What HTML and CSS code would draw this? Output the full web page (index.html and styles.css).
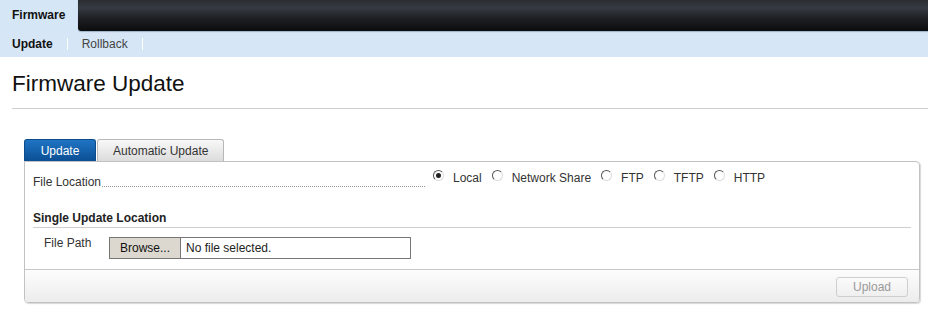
FILE: index.html
```html
<html lang="en">
<head>
  <meta charset="UTF-8">
  <title>Firmware</title>
  <link rel="stylesheet" href="styles.css">
</head>
<body>
  <div class="topbar">
    <div class="top-tab">Firmware</div>
    <div class="top-dark"></div>
  </div>
  <div class="subnav">
    <span class="sub-item active">Update</span>
    <span class="sub-sep"></span>
    <span class="sub-item">Rollback</span>
    <span class="sub-sep"></span>
  </div>

  <h1 class="page-title">Firmware Update</h1>

  <div class="content">
    <div class="tabs">
      <div class="tab selected">Update</div>
      <div class="tab">Automatic Update</div>
    </div>
    <div class="panel">
      <div class="panel-body">
        <div class="row">
          <div class="label-lead">
            <span>File Location</span>
            <span class="leader"></span>
          </div>
          <div class="radios">
            <label class="radio"><span class="dot checked"></span>Local</label>
            <label class="radio"><span class="dot"></span>Network Share</label>
            <label class="radio"><span class="dot"></span>FTP</label>
            <label class="radio"><span class="dot"></span>TFTP</label>
            <label class="radio"><span class="dot"></span>HTTP</label>
          </div>
        </div>
        <div class="section-title">Single Update Location</div>
        <div class="file-row">
          <span class="file-label">File Path</span>
          <div class="file-input">
            <span class="browse">Browse...</span>
            <span class="file-name">No file selected.</span>
          </div>
        </div>
      </div>
      <div class="panel-foot">
        <span class="upload">Upload</span>
      </div>
    </div>
  </div>
</body>
</html>
```
FILE: styles.css
```css
body {
  margin: 0;
  font-family: "Liberation Sans", Arial, sans-serif;
  font-size: 12px;
  color: #222;
  background: #fff;
}

.topbar {
  display: flex;
  height: 31px;
  background: #d5e6f7;
}

.top-tab {
  width: 66px;
  padding-left: 12px;
  line-height: 30px;
  font-weight: bold;
  color: #111;
}

.top-dark {
  flex: 1;
  background: linear-gradient(#2a2c30 0%, #363a42 25%, #1d1f23 60%, #0b0c0d 100%);
  border-bottom-left-radius: 3px;
  box-shadow: 0 1px 1px #9cb0c6;
}

.subnav {
  display: flex;
  align-items: center;
  height: 26px;
  padding-left: 12px;
  background: #d6e6f7;
}

.sub-item {
  color: #444;
}

.sub-item.active {
  font-weight: bold;
  color: #111;
}

.sub-sep {
  width: 1px;
  height: 12px;
  background: #fff;
  margin: 0 14px;
}

.page-title {
  margin: 13px 0 0 12px;
  padding-bottom: 10px;
  font-size: 22.5px;
  font-weight: normal;
  color: #111;
  line-height: 28px;
  border-bottom: 1px solid #cfcfcf;
}

.content {
  padding: 30px 8px 0 24px;
}

.tabs {
  display: flex;
  height: 22px;
}

.tab {
  line-height: 22px;
  padding: 0 15px;
  margin-right: 1px;
  background: linear-gradient(#f8f8f8, #dcdcdc);
  border: 1px solid #b8b8b8;
  border-bottom: none;
  border-radius: 3px 3px 0 0;
  color: #333;
  height: 22px;
  box-sizing: border-box;
}

.tab.selected {
  background: linear-gradient(#1f74c4, #0b4f94);
  border-color: #0c4c8c;
  color: #fff;
  width: 72px;
  text-align: center;
  padding: 0;
}

.panel {
  border: 1px solid #c2c2c2;
  border-radius: 0 4px 4px 4px;
  box-shadow: 1px 1px 1px #d8d8d8;
}

.panel-body {
  padding: 9px 8px 10px 8px;
}

.row {
  display: flex;
  align-items: flex-end;
  height: 18px;
}

.label-lead {
  display: flex;
  align-items: flex-end;
  width: 392px;
  margin-right: 8px;
  color: #333;
  line-height: 13px;
}

.leader {
  flex: 1;
  margin-left: 1px;
  margin-bottom: 2px;
  border-bottom: 1px dotted #999;
}

.radios {
  display: flex;
  align-items: center;
  align-self: flex-start;
}

.radio {
  display: flex;
  align-items: center;
  margin-right: 10px;
  color: #333;
}

.dot {
  width: 9px;
  height: 9px;
  border-radius: 50%;
  border: 1px solid #555;
  border-right-color: #ddd;
  border-bottom-color: #ddd;
  margin-right: 9px;
  margin-top: -6px;
  position: relative;
}

.dot.checked::after {
  content: "";
  position: absolute;
  left: 2px;
  top: 2px;
  width: 5px;
  height: 5px;
  border-radius: 50%;
  background: #222;
}

.section-title {
  margin-top: 22px;
  font-weight: bold;
  color: #222;
  padding-bottom: 2px;
  border-bottom: 1px solid #cfcfcf;
}

.file-row {
  display: flex;
  align-items: flex-start;
  margin-top: 9px;
  padding-left: 11px;
}

.file-label {
  width: 65px;
  color: #333;
  line-height: 12px;
}

.file-input {
  display: flex;
  width: 302px;
  height: 22px;
  border: 1px solid #777;
  box-sizing: border-box;
}

.browse {
  width: 70px;
  line-height: 20px;
  text-align: center;
  background: #dcd8d0;
  border-right: 1px solid #777;
  color: #111;
}

.file-name {
  padding-left: 5px;
  line-height: 20px;
  color: #222;
}

.panel-foot {
  display: flex;
  justify-content: flex-end;
  align-items: center;
  height: 32px;
  padding-right: 11px;
  border-top: 1px solid #c8c8c8;
  background: linear-gradient(#fdfdfd, #ececec);
  border-radius: 0 0 4px 4px;
}

.upload {
  width: 70px;
  height: 18px;
  line-height: 18px;
  margin-top: 1px;
  text-align: center;
  border: 1px solid #cfcfcf;
  border-radius: 3px;
  color: #9a9a9a;
  background: linear-gradient(#fbfbfb, #efefef);
}
```
